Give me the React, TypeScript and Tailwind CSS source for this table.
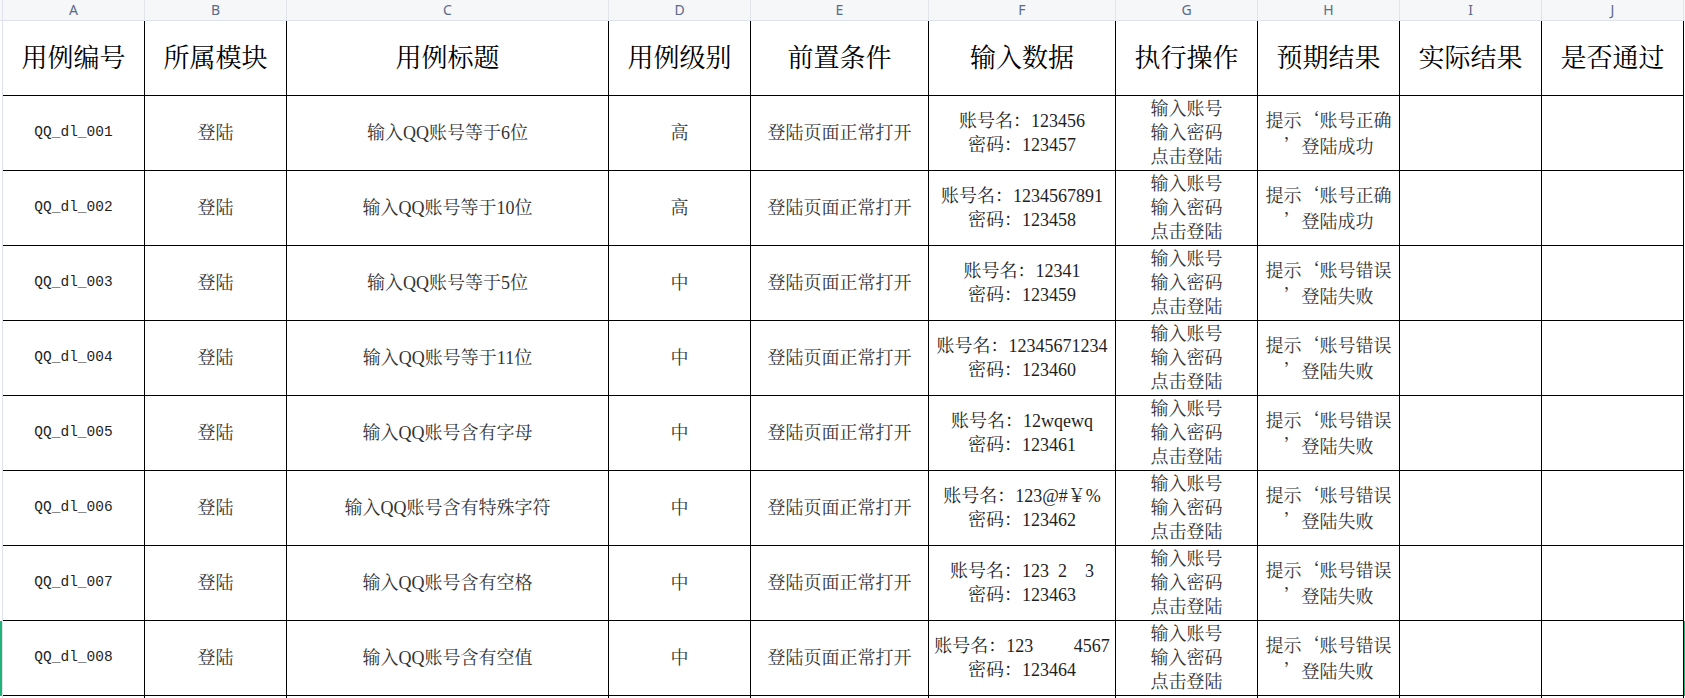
import React from "react";

const cols = ["A", "B", "C", "D", "E", "F", "G", "H", "I", "J"];
const grid = "grid grid-cols-[142px_142px_322px_142px_178px_187px_142px_142px_142px_142px]";

const headers = ["用例编号", "所属模块", "用例标题", "用例级别", "前置条件", "输入数据", "执行操作", "预期结果", "实际结果", "是否通过"];

type Case = { id: string; title: string; level: string; account: string; pwd: string; ok: boolean };

const cases: Case[] = [
  { id: "QQ_dl_001", title: "输入QQ账号等于6位", level: "高", account: "123456", pwd: "123457", ok: true },
  { id: "QQ_dl_002", title: "输入QQ账号等于10位", level: "高", account: "1234567891", pwd: "123458", ok: true },
  { id: "QQ_dl_003", title: "输入QQ账号等于5位", level: "中", account: "12341", pwd: "123459", ok: false },
  { id: "QQ_dl_004", title: "输入QQ账号等于11位", level: "中", account: "12345671234", pwd: "123460", ok: false },
  { id: "QQ_dl_005", title: "输入QQ账号含有字母", level: "中", account: "12wqewq", pwd: "123461", ok: false },
  { id: "QQ_dl_006", title: "输入QQ账号含有特殊字符", level: "中", account: "123@#￥%", pwd: "123462", ok: false },
  { id: "QQ_dl_007", title: "输入QQ账号含有空格", level: "中", account: "123\u20022\u2002\u20023", pwd: "123463", ok: false },
  { id: "QQ_dl_008", title: "输入QQ账号含有空值", level: "中", account: "123\u2002\u2002\u2002\u2002 4567", pwd: "123464", ok: false },
];

const serif = "font-['Liberation_Serif','Noto_Serif_CJK_SC','Noto_Sans_CJK_SC',serif]";
const cjk = "font-['Noto_Serif_CJK_SC','Noto_Sans_CJK_SC',serif]";

function Cell({ children, className = "" }: { children?: React.ReactNode; className?: string }) {
  return (
    <div className={`h-[75px] border-r border-b border-black flex flex-col items-center justify-center text-center overflow-hidden ${className}`}>
      {children}
    </div>
  );
}

function Row({ children, selected = false }: { children: React.ReactNode; selected?: boolean }) {
  return (
    <div className="flex">
      <div className={`w-[3px] shrink-0 border-r ${selected ? "border-[#e0e4eb] bg-[#21b27a]" : "border-[#dde2ec] bg-white"}`} />
      <div className={grid}>{children}</div>
      <div className={`w-[1px] shrink-0 ${selected ? "bg-[#21b27a]" : "bg-white"}`} />
    </div>
  );
}

export default function App() {
  return (
    <div className={`w-[1685px] h-[698px] overflow-hidden bg-white text-[#1f1f1f] ${serif}`}>
      {/* column letters */}
      <div className="flex h-[21px] bg-[#f5f7f9] border-b border-[#dde2ec]">
        <div className="w-[3px] shrink-0 border-r border-[#dde2ec]" />
        <div className={grid}>
          {cols.map((c) => (
            <div key={c} className="border-r border-[#e0e4eb] flex items-center justify-center font-['Noto_Sans','Liberation_Sans',sans-serif] text-[14px] leading-[18px] text-[#5b6a8a]">
              {c}
            </div>
          ))}
        </div>
      </div>

      {/* header */}
      <Row>
        {headers.map((h) => (
          <Cell key={h} className="text-[26px] text-black">
            {h}
          </Cell>
        ))}
      </Row>

      {cases.map((c, i) => (
        <Row key={c.id} selected={i === cases.length - 1}>
          <Cell className="font-['Liberation_Mono',monospace] text-[14.5px]">{c.id}</Cell>
          <Cell className="text-[18px] text-[#333]">登陆</Cell>
          <Cell className="text-[18px] text-[#333]">{c.title}</Cell>
          <Cell className="text-[18px] text-[#333]">{c.level}</Cell>
          <Cell className="text-[18px] text-[#333]">登陆页面正常打开</Cell>
          <Cell className="text-[18px] leading-[24px]">
            <span className="whitespace-pre">账号名：{c.account}</span>
            <span>密码：{c.pwd}</span>
          </Cell>
          <Cell className="text-[18px] leading-[24px] text-[#333]">
            <span>输入账号</span>
            <span>输入密码</span>
            <span>点击登陆</span>
          </Cell>
          <Cell className="text-[18px] leading-[24px] text-[#333]">
            <span>
              提示<span className={cjk}>‘</span>账号{c.ok ? "正确" : "错误"}
            </span>
            <span>
              <span className={cjk}>’</span>登陆{c.ok ? "成功" : "失败"}
            </span>
          </Cell>
          <Cell />
          <Cell />
        </Row>
      ))}

      <Row>
        {cols.map((c) => (
          <Cell key={c} />
        ))}
      </Row>
    </div>
  );
}
